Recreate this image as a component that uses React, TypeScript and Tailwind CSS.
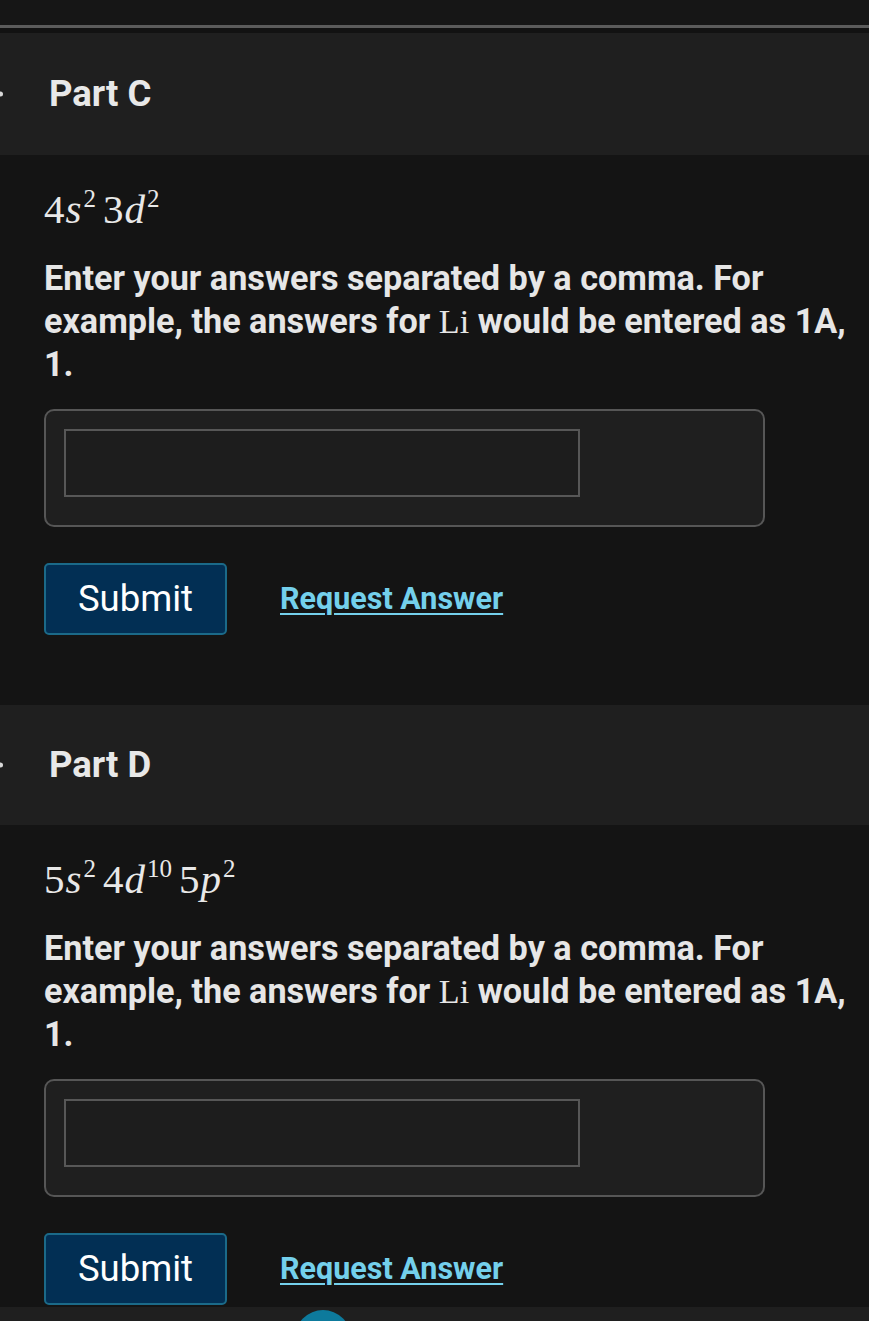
const SERIF = "font-['Liberation_Serif','Times_New_Roman',serif]";

type Term = { coef: string; orb: string; exp: string };

const PARTS: { label: string; headH: string; terms: Term[] }[] = [
  {
    label: "Part C",
    headH: "h-[122px]",
    terms: [
      { coef: "4", orb: "s", exp: "2" },
      { coef: "3", orb: "d", exp: "2" },
    ],
  },
  {
    label: "Part D",
    headH: "h-[120px]",
    terms: [
      { coef: "5", orb: "s", exp: "2" },
      { coef: "4", orb: "d", exp: "10" },
      { coef: "5", orb: "p", exp: "2" },
    ],
  },
];

function Config({ terms }: { terms: Term[] }) {
  return (
    <div className={`${SERIF} flex h-[38px] items-baseline gap-[7px] text-[41px] leading-[38px] text-[#e8e8e8]`}>
      {terms.map((t, i) => (
        <span key={i} className="whitespace-nowrap">
          {t.coef}
          <i className="pl-[1px] pr-[2px]">{t.orb}</i>
          <span className="relative top-[-16px] align-baseline text-[25px]">{t.exp}</span>
        </span>
      ))}
    </div>
  );
}

function Part({ label, headH, terms }: { label: string; headH: string; terms: Term[] }) {
  return (
    <section>
      <div className={`relative flex ${headH} items-center bg-[#1f1f1f] pl-[49px]`}>
        <span className="absolute left-0 top-1/2 h-[5px] w-[3px] -translate-y-1/2 rounded-r-full bg-[#d8d8d8]" />
        <h2 className="text-[36.5px] font-bold leading-none text-[#e8e8e8]">{label}</h2>
      </div>
      <div className="pb-[70px] pl-[44px] pr-[12px] pt-[35px]">
        <Config terms={terms} />
        <p className="mt-[29px] text-[34.2px] font-bold leading-[43px] text-[#e6e6e6]">
          Enter your answers separated by a comma. For example, the answers for{" "}
          <span className={`${SERIF} font-normal`}>Li</span> would be entered as 1A, 1.
        </p>
        <div className="mt-[23px] h-[118px] w-[721px] rounded-[10px] border-2 border-[#565656] bg-[#1f1f1f] pl-[18px] pt-[18px]">
          <div className="h-[68px] w-[516px] border-2 border-[#575757] bg-[#1d1d1d]" />
        </div>
        <div className="mt-[36px] flex items-center gap-[53px]">
          <button className="h-[72px] w-[183px] rounded-[5px] border-2 border-[#1b6a89] bg-[#022f54] text-[36.5px] leading-none text-white">
            Submit
          </button>
          <a className="text-[30.5px] font-bold text-[#74d0ec] underline decoration-2 underline-offset-[4px]">
            Request Answer
          </a>
        </div>
      </div>
    </section>
  );
}

export default function App() {
  return (
    <div className="relative min-h-[1321px] bg-[#141414] font-['Roboto','Liberation_Sans',sans-serif]">
      <div className="h-[25px] bg-[#161616]" />
      <div className="h-[3px] bg-[#5b5b5b]" />
      <div className="h-[5px] bg-[#121212]" />
      {PARTS.map((p) => (
        <Part key={p.label} {...p} />
      ))}
      <div className="fixed bottom-0 left-0 h-[14px] w-full overflow-hidden bg-[#1f1f1f]">
        <div className="absolute left-[295px] top-[3px] h-[56px] w-[56px] rounded-full bg-[#0d7a9c]" />
      </div>
    </div>
  );
}
